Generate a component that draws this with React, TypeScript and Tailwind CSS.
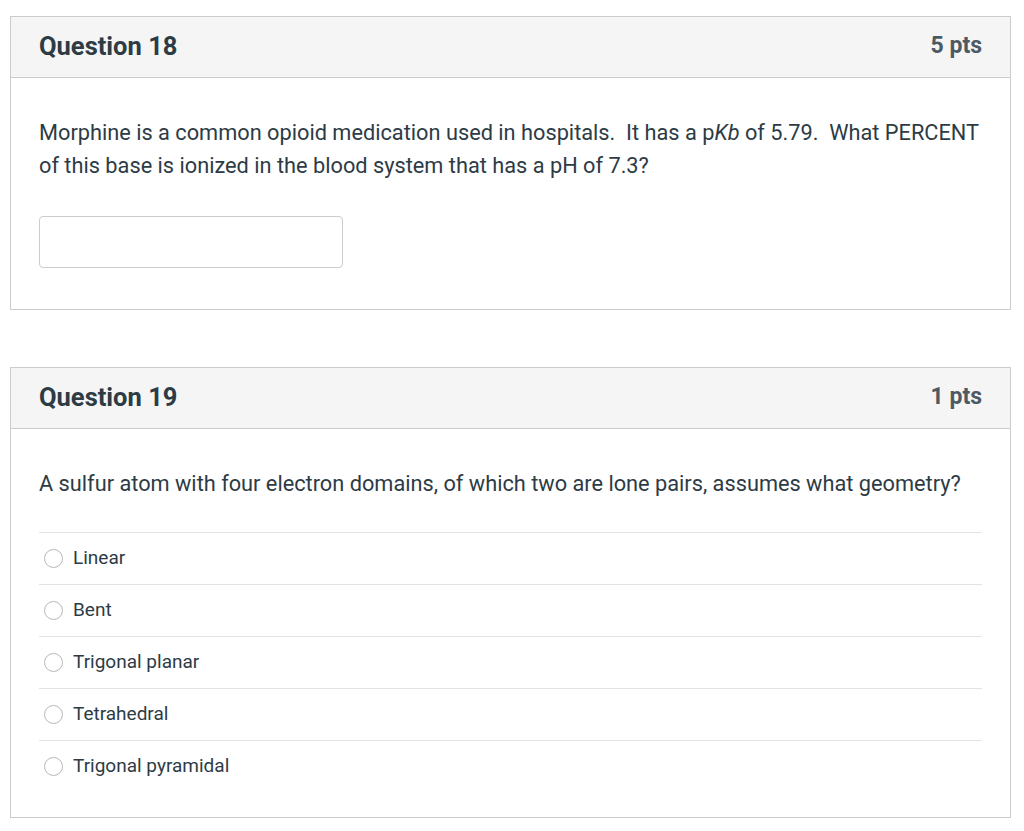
const ANSWERS = ['Linear', 'Bent', 'Trigonal planar', 'Tetrahedral', 'Trigonal pyramidal'];

function Header({ title, pts }: { title: string; pts: string }) {
  return (
    <div className="flex h-[61px] items-center justify-between border-b border-[#c7cdd1] bg-[#f5f5f5] px-[28px] pb-[2px]">
      <h2 className="text-[25.5px] font-bold text-[#2d3b45]">{title}</h2>
      <div className="text-[23px] font-bold text-[#4d5a63]">{pts}</div>
    </div>
  );
}

export default function App() {
  return (
    <div
      className="min-h-[831px] bg-white px-[10px] pt-[16px] text-[#2d3b45]"
      style={{ fontFamily: 'Roboto, "Noto Sans", sans-serif' }}
    >
      <div className="w-[1001px] border border-[#c7cdd1]">
        <Header title="Question 18" pts="5 pts" />
        <div className="px-[28px] pb-[41px] pt-[38px]">
          <p className="text-[21.75px] leading-[33px]">
            Morphine is a common opioid medication used in hospitals.&nbsp; It has a p<i>Kb</i> of
            5.79.&nbsp; What PERCENT of this base is ionized in the blood system that has a pH of 7.3?
          </p>
          <input
            type="text"
            className="mt-[34px] block h-[52px] w-[304px] rounded-[4px] border border-[#c7cdd1] bg-white"
          />
        </div>
      </div>

      <div className="mt-[57px] w-[1001px] border border-[#c7cdd1]">
        <Header title="Question 19" pts="1 pts" />
        <div className="px-[28px] pb-[25px] pt-[38px]">
          <p className="text-[21.75px] leading-[33px]">
            A sulfur atom with four electron domains, of which two are lone pairs, assumes what geometry?
          </p>
          <div className="mt-[32px]">
            {ANSWERS.map((a) => (
              <label
                key={a}
                className="flex h-[52px] items-center border-t border-[#e0e3e5] pl-[5px]"
              >
                <span className="h-[19px] w-[19px] shrink-0 rounded-full border border-[#b5b9bc] bg-white" />
                <span className="ml-[10px] text-[19px]">{a}</span>
              </label>
            ))}
          </div>
        </div>
      </div>
    </div>
  );
}
